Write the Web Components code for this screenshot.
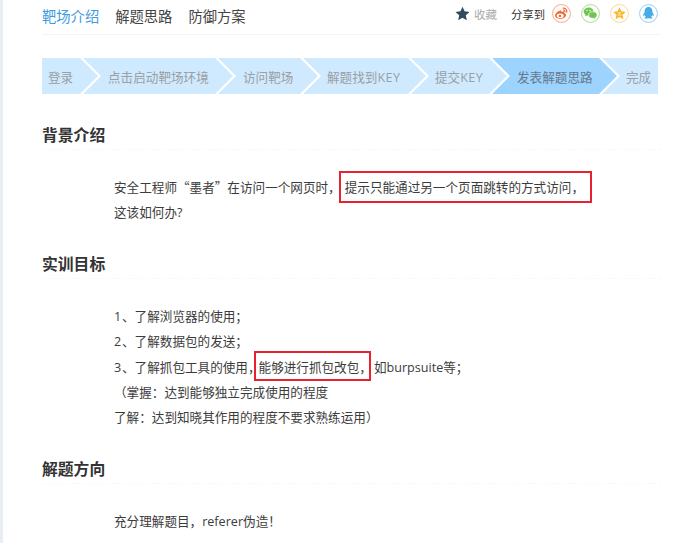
<!DOCTYPE html>
<html lang="zh-CN">
<head>
<meta charset="utf-8">
<title>靶场介绍</title>
<style>
  html, body { margin: 0; height: 100%; background: #fff; overflow: hidden; }
  body {
    font-family: "Noto Sans CJK SC", "Liberation Sans", sans-serif;
    color: #333;
  }
</style>
</head>
<body>
<range-page>
  <range-header slot="header"></range-header>
  <range-steps slot="steps" active="5">
    <range-step width="56" pad="6">登录</range-step>
    <range-step width="150" pad="25">点击启动靶场环境</range-step>
    <range-step width="100" pad="25">访问靶场</range-step>
    <range-step width="123" pad="24">解题找到<lat-text>KEY</lat-text></range-step>
    <range-step width="96" pad="24">提交<lat-text>KEY</lat-text></range-step>
    <range-step width="125" pad="25">发表解题思路</range-step>
    <range-step width="56" pad="24">完成</range-step>
  </range-steps>

  <range-section title="背景介绍">
    <p>安全工程师“墨者”在访问一个网页时，<red-box style="--l:-6px;--r:-8px;--t:-6.5px;--b:-6.5px;margin-left:4px">提示只能通过另一个页面跳转的方式访问，</red-box></p>
    <p>这该如何办<lat-text>?</lat-text></p>
  </range-section>

  <range-section title="实训目标">
    <p><lat-text style="--lat-spacing:.8px">1</lat-text>、了解浏览器的使用；</p>
    <p><lat-text style="--lat-spacing:.8px">2</lat-text>、了解数据包的发送；</p>
    <p><lat-text style="--lat-spacing:.8px">3</lat-text>、了解抓包工具的使用，<red-box style="--l:-5px;--r:1px;--t:-6px;--b:-5.5px;margin:0 2px 0 -2px">能够进行抓包改包，</red-box>如<lat-text>burpsuite</lat-text>等；</p>
    <p>（掌握：达到能够独立完成使用的程度</p>
    <p>了解：达到知晓其作用的程度不要求熟练运用）</p>
  </range-section>

  <range-section title="解题方向">
    <p>充分理解题目，<lat-text>referer</lat-text>伪造！</p>
  </range-section>
</range-page>

<script>
class RangePage extends HTMLElement {
  constructor() {
    super();
    this.attachShadow({ mode: 'open' });
    this.shadowRoot.innerHTML = `
      <style>
        :host {
          display: block;
          height: 543px;
          box-sizing: border-box;
          border-left: 3px solid #e9eef3;
          padding-left: 39px;
          padding-right: 25px;
          overflow: hidden;
        }
      </style>
      <slot name="header"></slot>
      <slot name="steps"></slot>
      <slot></slot>
    `;
  }
}

class RangeHeader extends HTMLElement {
  constructor() {
    super();
    this.attachShadow({ mode: 'open' });
    this.shadowRoot.innerHTML = `
      <style>
        :host {
          display: flex;
          align-items: center;
          justify-content: space-between;
          height: 35px;
          box-sizing: border-box;
          border-bottom: 1px solid #f2f3f5;
        }
        .tabs { display: flex; gap: 16px; font-size: 14.3px; color: #444; padding-bottom: 4px; }
        .tabs .on { color: #3d9be0; }
        .tools { display: flex; align-items: center; padding: 0 3px 7px 0; }
        .fav { font-size: 11.5px; color: #aaa; margin: 0 14px 0 4px; }
        .share { font-size: 11.3px; color: #333; margin-right: 7px; }
        svg { display: block; flex: none; }
        .ico { width: 19px; height: 19px; margin-right: 10px; }
        .ico:last-child { margin-right: 0; }
      </style>
      <div class="tabs"><span class="on">靶场介绍</span><span>解题思路</span><span>防御方案</span></div>
      <div class="tools">
        <svg width="15" height="15" viewBox="0 0 16 16"><path fill="#34495e" d="M8 .8l2.200 4.900 5.300.6-4 3.600 1.100 5.300L8 12.500l-4.600 2.700 1.100-5.300-4-3.600 5.300-.6z"/></svg>
        <span class="fav">收藏</span>
        <span class="share">分享到</span>
        <svg class="ico" viewBox="0 0 20 20">
          <circle cx="10" cy="10" r="9.400" fill="#fff" stroke="#f7a184"/>
          <path fill="#f2662f" d="M8 7c-2.400.8-4.800 3-4.800 5.100 0 2 2.600 3.500 5.500 3.500 3.200 0 6.100-1.700 6.100-3.900 0-1.200-1-1.800-1.900-2 .5-1.200.2-2.200-2-1.600l-1 .4C10.200 7 9.800 6.400 8 7z"/>
          <ellipse cx="8.600" cy="12.400" rx="3.700" ry="2.400" fill="#fff"/>
          <circle cx="8.300" cy="12.500" r="1.300" fill="#f2662f"/>
          <path fill="none" stroke="#f2662f" stroke-width="1.300" d="M11.300 4.400c2.500-.5 4.900 1.700 4.200 4.600M11.700 6.500c1.200-.2 2.200.8 1.900 2"/>
        </svg>
        <svg class="ico" viewBox="0 0 20 20">
          <circle cx="10" cy="10" r="9.400" fill="#fff" stroke="#a5d88c"/>
          <ellipse cx="8" cy="8" rx="5.200" ry="4.200" fill="#72c44e"/>
          <path fill="#72c44e" d="M5 10.500l-.8 2.400 2.800-1.400z"/>
          <ellipse cx="12.500" cy="11.600" rx="4.400" ry="3.500" fill="#72c44e" stroke="#fff" stroke-width=".7"/>
          <path fill="#72c44e" d="M14.500 14l1 1.800-2.600-1.200z"/>
          <circle cx="6.300" cy="6.800" r=".7" fill="#fff"/><circle cx="9.500" cy="6.800" r=".7" fill="#fff"/>
        </svg>
        <svg class="ico" viewBox="0 0 20 20">
          <circle cx="10" cy="10" r="9.400" fill="#fff" stroke="#fcd58a"/>
          <path fill="#f9b72c" d="M10 3.400l2 4.300 4.700.6-3.500 3.100 1 4.600-4.200-2.400-4.200 2.400 1-4.600-3.500-3.100L8 7.700z"/>
          <path fill="#fdeebb" d="M7.800 9h4.500l-2.700 2.300h2.800v.8H7.700l2.700-2.300H7.800z"/>
        </svg>
        <svg class="ico" viewBox="0 0 20 20">
          <circle cx="10" cy="10" r="9.400" fill="#fff" stroke="#8ccdf3"/>
          <path fill="#44ace9" d="M10 3.200c-2.600 0-4.100 2-4.100 4.400v1.200c-1 1.200-1.600 2.700-1.300 3.900.3.300 1-.3 1.400-1 .2.800.6 1.500 1.200 2-.8.300-1.500.8-1.300 1.300.3.500 2.100.4 4.100 0 2 .4 3.800.5 4.100 0 .2-.5-.5-1-1.300-1.300.6-.5 1-1.200 1.200-2 .4.700 1.100 1.300 1.400 1 .3-1.200-.3-2.700-1.300-3.900V7.600c0-2.400-1.500-4.400-4.100-4.400z"/>
        </svg>
      </div>
    `;
  }
}

class RangeSteps extends HTMLElement {
  constructor() {
    super();
    this.attachShadow({ mode: 'open' });
    this.shadowRoot.innerHTML = `
      <style>
        :host { display: flex; margin: 23px 0 22px; height: 36px; --lat-spacing: .4px; }
      </style>
      <slot></slot>
    `;
  }
  connectedCallback() {
    const steps = [...this.children];
    const active = parseInt(this.getAttribute('active') || '0', 10);
    steps.forEach((step, i) => {
      if (i === active) step.setAttribute('active', '');
      if (i === 0) step.setAttribute('first', '');
      if (i === steps.length - 1) step.setAttribute('last', '');
    });
  }
}

class RangeStep extends HTMLElement {
  static get observedAttributes() { return ['width', 'pad']; }
  constructor() {
    super();
    this.attachShadow({ mode: 'open' });
    this.shadowRoot.innerHTML = `
      <style>
        :host {
          display: flex;
          align-items: center;
          box-sizing: border-box;
          height: 36px;
          flex: none;
          background: #cfeaff;
          color: #9a9fa3;
          font-size: 12.6px;
          white-space: nowrap;
          margin-right: -15px;
          clip-path: polygon(0 0, calc(100% - 18px) 0, 100% 50%, calc(100% - 18px) 100%, 0 100%, 18px 50%);
        }
        :host([first]) { clip-path: polygon(0 0, calc(100% - 18px) 0, 100% 50%, calc(100% - 18px) 100%, 0 100%); }
        :host([last]) { margin-right: 0; clip-path: polygon(0 0, 100% 0, 100% 100%, 0 100%, 18px 50%); }
        :host([active]) { background: #9cd4ff; color: #66788a; }
      </style>
      <div><slot></slot></div>
    `;
  }
  attributeChangedCallback(name, oldValue, newValue) {
    if (name === 'width') this.style.width = newValue + 'px';
    if (name === 'pad') this.style.paddingLeft = newValue + 'px';
  }
}

class RangeSection extends HTMLElement {
  constructor() {
    super();
    this.attachShadow({ mode: 'open' });
    this.shadowRoot.innerHTML = `
      <style>
        :host { display: block; }
        h2 {
          margin: 0;
          font-size: 15.8px;
          font-weight: bold;
          line-height: 22px;
          height: 34px;
          color: #333;
          border-bottom: 1px dashed #f8f8f8;
          box-sizing: border-box;
          padding-top: 8px;
        }
        .body {
          padding: 24px 0 20.5px 72px;
          font-size: 12.6px;
          line-height: 25.300px;
          color: #3c3c3c;
        }
        ::slotted(p) { margin: 0; }
      </style>
      <h2></h2>
      <div class="body"><slot></slot></div>
    `;
    this.shadowRoot.querySelector('h2').textContent = this.getAttribute('title');
  }
}

class RedBox extends HTMLElement {
  constructor() {
    super();
    this.attachShadow({ mode: 'open' });
    this.shadowRoot.innerHTML = `<style>
        :host { display: inline; position: relative; }
        .frame {
          position: absolute;
          left: var(--l, 0);
          right: var(--r, 0);
          top: var(--t, 0);
          bottom: var(--b, 0);
          border: 2px solid #e8212f;
        }
      </style><slot></slot><span class="frame"></span>`;
  }
}

class LatText extends HTMLElement {
  constructor() {
    super();
    this.attachShadow({ mode: 'open' });
    this.shadowRoot.innerHTML = `<style>
        :host { display: inline; font-family: "Open Sans", sans-serif; letter-spacing: var(--lat-spacing, 0); line-height: 1; }
      </style><slot></slot>`;
  }
}

customElements.define('range-page', RangePage);
customElements.define('range-header', RangeHeader);
customElements.define('range-steps', RangeSteps);
customElements.define('range-step', RangeStep);
customElements.define('range-section', RangeSection);
customElements.define('red-box', RedBox);
customElements.define('lat-text', LatText);
</script>
</body>
</html>
